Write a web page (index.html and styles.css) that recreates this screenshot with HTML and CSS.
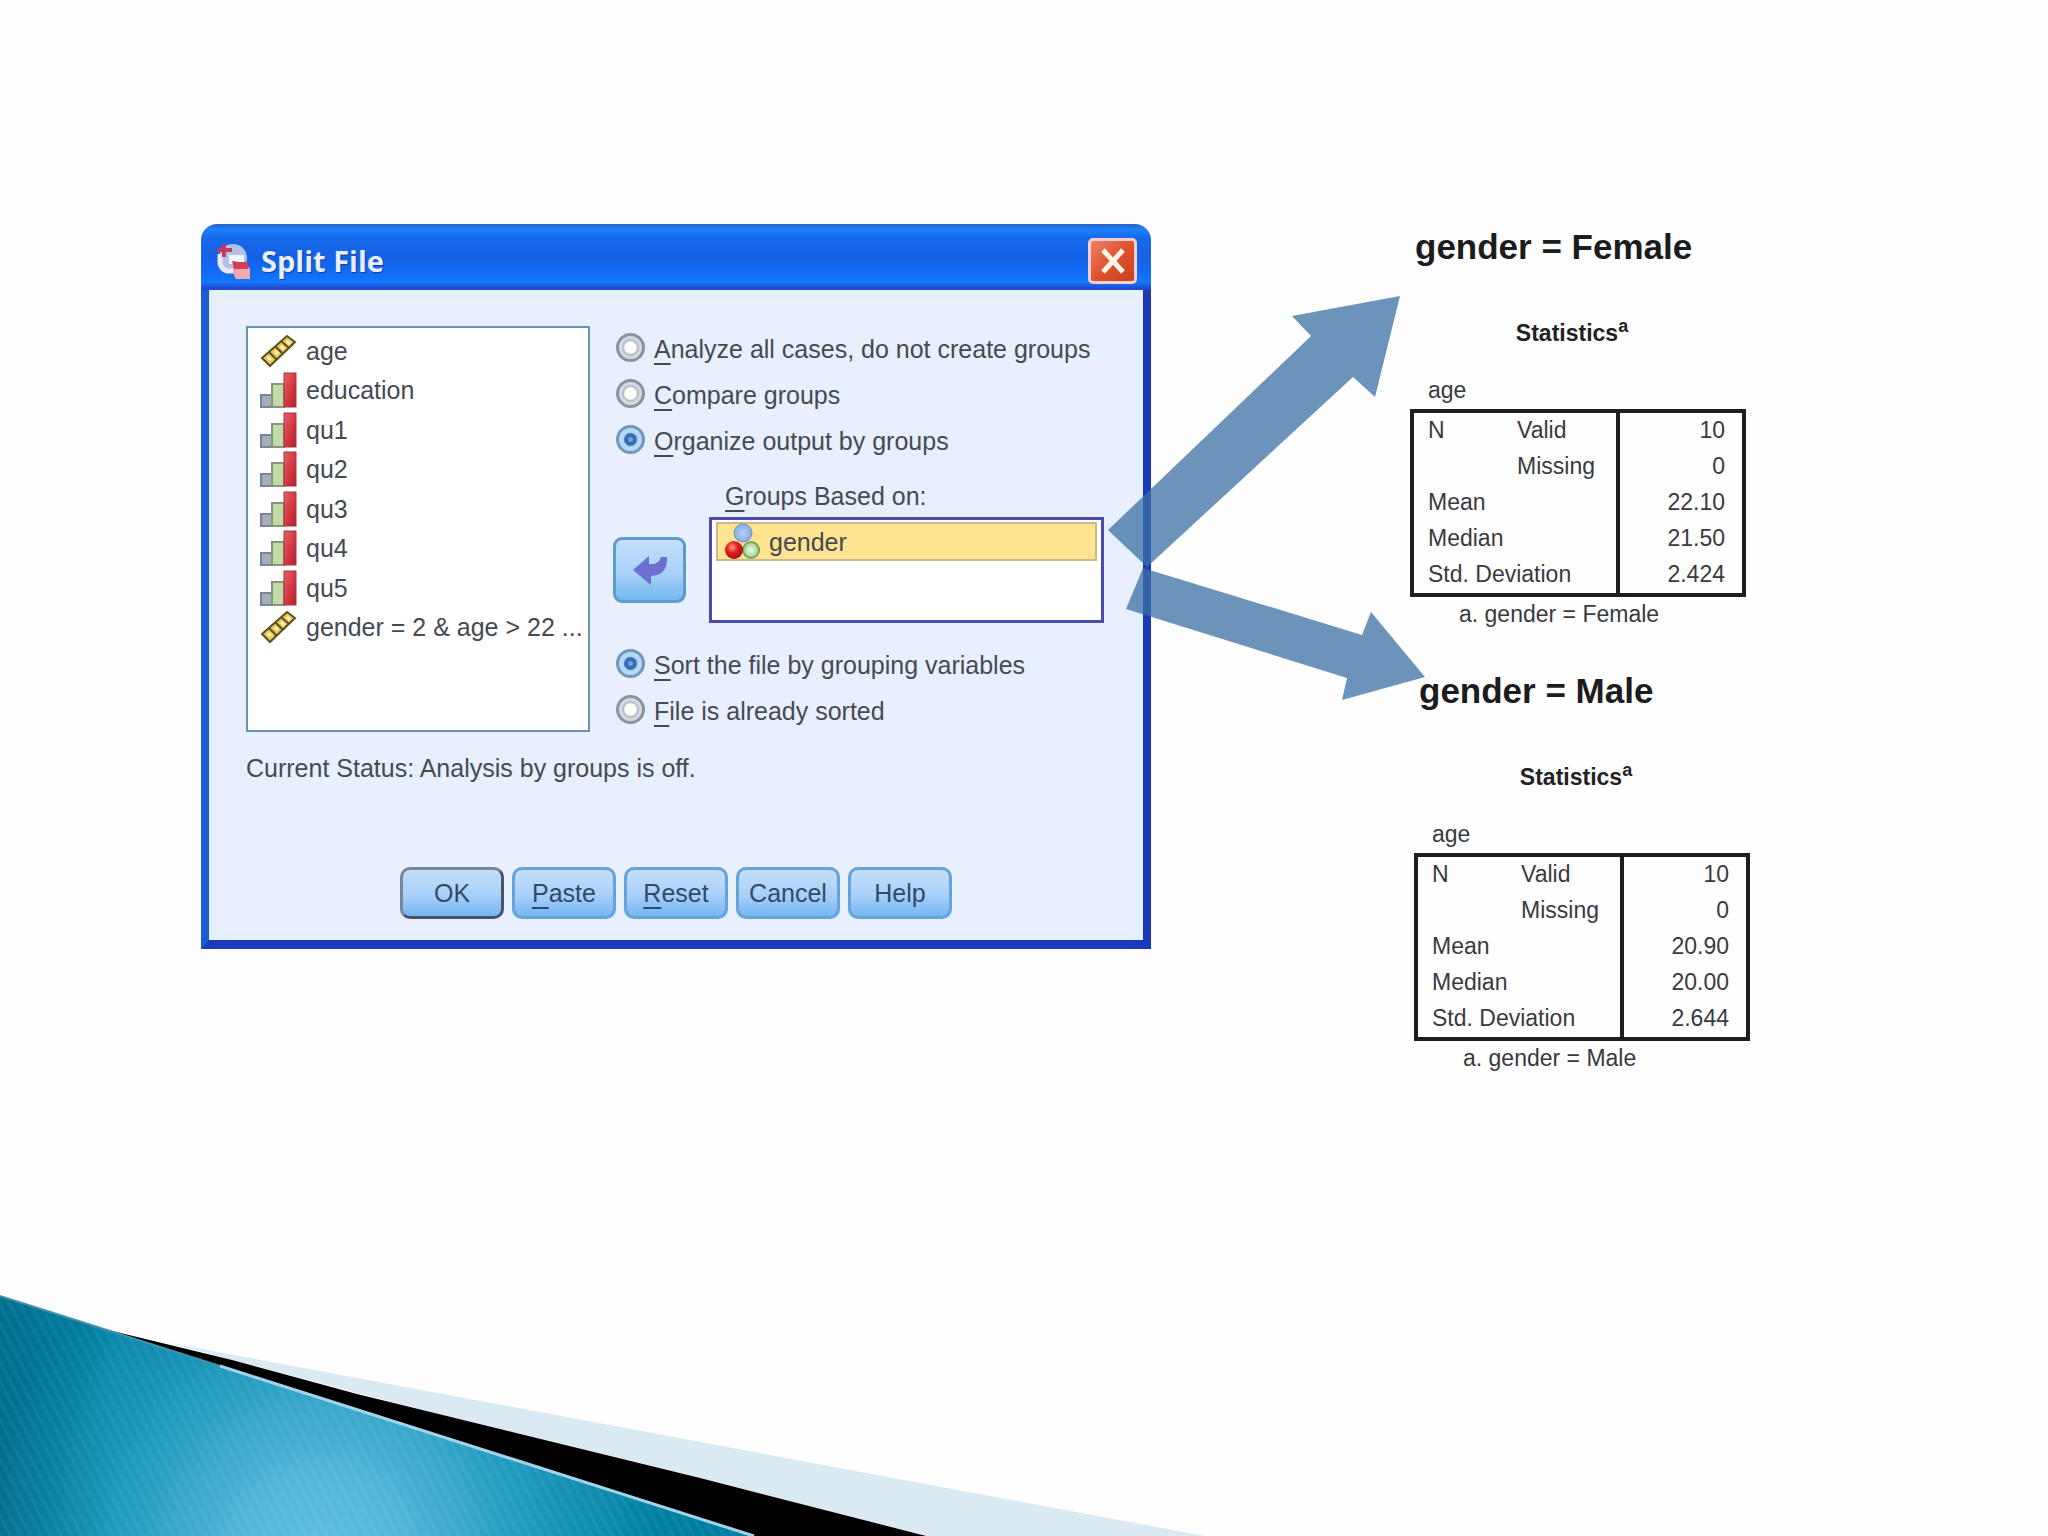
FILE: index.html
```html
<!DOCTYPE html>
<html lang="en">
<head>
    <meta charset="UTF-8">
    <meta name="viewport" content="width=device-width, initial-scale=1.0">
    <title>Split File</title>
    <link rel="stylesheet" href="styles.css">
</head>
<body>

    <!-- Shared icons -->
    <svg class="icon-defs" width="0" height="0" aria-hidden="true">
        <defs>
            <linearGradient id="red" x1="0" y1="0" x2="1" y2="1">
                <stop offset="0" stop-color="#d9656a"/>
                <stop offset="0.5" stop-color="#d93a45"/>
                <stop offset="1" stop-color="#b01f2a"/>
            </linearGradient>
            <radialGradient id="redBall" cx="0.4" cy="0.35" r="0.6">
                <stop offset="0" stop-color="#ff9a86"/>
                <stop offset="0.5" stop-color="#e5231c"/>
                <stop offset="1" stop-color="#b01313"/>
            </radialGradient>
            <radialGradient id="blueBall" cx="0.5" cy="0.5" r="0.6">
                <stop offset="0" stop-color="#b9d3f8"/>
                <stop offset="1" stop-color="#7ba3dd"/>
            </radialGradient>
            <radialGradient id="greenBall" cx="0.5" cy="0.5" r="0.6">
                <stop offset="0" stop-color="#eefbe0"/>
                <stop offset="1" stop-color="#8cc47a"/>
            </radialGradient>
            <symbol id="scale" viewBox="0 0 37 36">
                <path d="M2 25L27 3L35 9L10 33Z" fill="#e8c95c" stroke="#5c4f22" stroke-width="2"/>
                <path d="M9 19L17 27M15 13L23 21M21 8L29 15" stroke="#5c4f22" stroke-width="2"/>
                <path d="M8 24l3 3M15 18l3 3M21 13l3 3M27 8l3 3" stroke="#fbf3c0" stroke-width="3"/>
            </symbol>
            <symbol id="ordinal" viewBox="0 0 37 36">
                <rect x="1" y="23" width="12" height="12" fill="#a3adbd" stroke="#7b8492" stroke-width="2"/>
                <rect x="12" y="12" width="12" height="23" fill="#c3dba6" stroke="#87957a" stroke-width="2"/>
                <rect x="24" y="1" width="12" height="34" fill="url(#red)" stroke="#a8343c" stroke-width="1"/>
            </symbol>
        </defs>
    </svg>

    <main class="slide">
        <div class="content">

            <form class="dialog">
                <header class="titlebar">
                    <svg class="app-icon" viewBox="0 0 36 38" aria-hidden="true">
                        <circle cx="18" cy="16" r="14" fill="#b3c3e8"/>
                        <path d="M5 12v8a9 9 0 0 0 9 9h4" fill="none" stroke="#efe6f3" stroke-width="5"/>
                        <path d="M14 13h15v9H14z" fill="#f4f4fb"/>
                        <path d="M2 8h15M9 2v13" stroke="#c5395c" stroke-width="4"/>
                        <path d="M18 22h13l4 5v10H21l-3-6z" fill="#f3a9b1"/>
                        <path d="M17 19l7 1h9v7H19z" fill="#d83c50"/>
                    </svg>
                    <h1>Split File</h1>
                    <button type="button" class="close" aria-label="Close">
                        <svg viewBox="0 0 24 26" aria-hidden="true"><path d="M2 2L22 24M22 2L2 24" stroke="#fff6e8" stroke-width="5"/></svg>
                    </button>
                </header>

                <div class="client">
                    <div class="columns">
                        <ul class="variables">
                            <li><svg aria-hidden="true"><use href="#scale"/></svg>age</li>
                            <li><svg aria-hidden="true"><use href="#ordinal"/></svg>education</li>
                            <li><svg aria-hidden="true"><use href="#ordinal"/></svg>qu1</li>
                            <li><svg aria-hidden="true"><use href="#ordinal"/></svg>qu2</li>
                            <li><svg aria-hidden="true"><use href="#ordinal"/></svg>qu3</li>
                            <li><svg aria-hidden="true"><use href="#ordinal"/></svg>qu4</li>
                            <li><svg aria-hidden="true"><use href="#ordinal"/></svg>qu5</li>
                            <li><svg aria-hidden="true"><use href="#scale"/></svg>gender = 2 &amp; age &gt; 22 ...</li>
                        </ul>

                        <div class="options">
                            <div class="radios">
                                <label><input type="radio" name="mode"><span><u>A</u>nalyze all cases, do not create groups</span></label>
                                <label><input type="radio" name="mode"><span><u>C</u>ompare groups</span></label>
                                <label><input type="radio" name="mode" checked><span><u>O</u>rganize output by groups</span></label>
                            </div>

                            <div class="groups">
                                <span class="groups-label" id="groupsLabel"><u>G</u>roups Based on:</span>
                                <button type="button" class="move" aria-label="Remove variable">
                                    <svg viewBox="0 0 34 32" aria-hidden="true"><path d="M0 16L16 2V10Q26 11 28 3H34Q35 21 18 22V31Z" fill="#6c70cf"/></svg>
                                </button>
                                <ul class="group-list" aria-labelledby="groupsLabel">
                                    <li>
                                        <svg viewBox="0 0 37 37" aria-hidden="true">
                                            <circle cx="19" cy="10" r="9" fill="url(#blueBall)" stroke="#6f93c4"/>
                                            <circle cx="27" cy="27" r="8" fill="url(#greenBall)" stroke="#6ea85c" stroke-width="2"/>
                                            <circle cx="10" cy="27" r="9" fill="url(#redBall)"/>
                                        </svg>
                                        gender
                                    </li>
                                </ul>
                            </div>

                            <div class="radios">
                                <label><input type="radio" name="sort" checked><span><u>S</u>ort the file by grouping variables</span></label>
                                <label><input type="radio" name="sort"><span><u>F</u>ile is already sorted</span></label>
                            </div>
                        </div>
                    </div>

                    <p class="status">Current Status: Analysis by groups is off.</p>

                    <div class="buttons">
                        <button type="submit" class="default">OK</button>
                        <button type="button"><u>P</u>aste</button>
                        <button type="reset"><u>R</u>eset</button>
                        <button type="button">Cancel</button>
                        <button type="button">Help</button>
                    </div>
                </div>
            </form>

            <div class="reports">
                <section class="report">
                    <h2>gender = Female</h2>
                    <h3>Statistics<sup>a</sup></h3>
                    <p class="variable">age</p>
                    <table>
                        <tr><th class="stat">N</th><th class="edge">Valid</th><td>10</td></tr>
                        <tr><th class="stat"></th><th class="edge">Missing</th><td>0</td></tr>
                        <tr><th class="stat edge" colspan="2">Mean</th><td>22.10</td></tr>
                        <tr><th class="stat edge" colspan="2">Median</th><td>21.50</td></tr>
                        <tr><th class="stat edge" colspan="2">Std. Deviation</th><td>2.424</td></tr>
                    </table>
                    <p class="note">a. gender = Female</p>
                </section>

                <section class="report">
                    <h2>gender = Male</h2>
                    <h3>Statistics<sup>a</sup></h3>
                    <p class="variable">age</p>
                    <table>
                        <tr><th class="stat">N</th><th class="edge">Valid</th><td>10</td></tr>
                        <tr><th class="stat"></th><th class="edge">Missing</th><td>0</td></tr>
                        <tr><th class="stat edge" colspan="2">Mean</th><td>20.90</td></tr>
                        <tr><th class="stat edge" colspan="2">Median</th><td>20.00</td></tr>
                        <tr><th class="stat edge" colspan="2">Std. Deviation</th><td>2.644</td></tr>
                    </table>
                    <p class="note">a. gender = Male</p>
                </section>
            </div>

            <!-- Arrows from the group list to each report -->
            <svg class="arrows" viewBox="0 0 340 430" aria-hidden="true">
                <path d="M7 246L210 52L191 32L299 12L274 113L252 93L46 283Z"/>
                <path d="M42 284L261 351L270 328L324 393L241 416L246 394L25 325Z"/>
            </svg>
        </div>

        <svg class="swoosh" viewBox="0 0 2048 246" aria-hidden="true">
            <defs>
                <radialGradient id="teal" gradientUnits="userSpaceOnUse" cx="0" cy="0" r="1" gradientTransform="translate(320 270) rotate(-68) scale(360 340)">
                    <stop offset="0" stop-color="#62c0e2"/>
                    <stop offset="0.25" stop-color="#52b5d8"/>
                    <stop offset="0.6" stop-color="#209abf"/>
                    <stop offset="1" stop-color="#007fa3"/>
                </radialGradient>
                <linearGradient id="shade" x1="0" x2="1">
                    <stop offset="0" stop-color="#00596f" stop-opacity="0.4"/>
                    <stop offset="0.15" stop-color="#00596f" stop-opacity="0"/>
                </linearGradient>
                <pattern id="stripes" width="9" height="9" patternUnits="userSpaceOnUse" patternTransform="rotate(-28)">
                    <rect width="4" height="9" fill="#ffffff" opacity="0.04"/>
                </pattern>
            </defs>
            <path d="M170 53L1205 246H900L232 70Z" fill="#daeaf2"/>
            <path d="M100 38L232 70L357 104L700 188L926 246H740Z" fill="#000000"/>
            <path d="M0 6L754 246H0Z" fill="url(#teal)"/>
            <path d="M0 6L754 246H0Z" fill="url(#shade)"/>
            <path d="M0 6L754 246H0Z" fill="url(#stripes)"/>
            <path d="M0 6L220 76" stroke="#3f93aa" stroke-width="2"/>
            <path d="M220 76L754 246" stroke="#a3d3e8" stroke-width="3"/>
        </svg>
    </main>

</body>
</html>
```

FILE: styles.css
```css
* {
    box-sizing: border-box;
}
body {
    margin: 0;
    background-color: #fefefe;
    font-family: "Liberation Sans", Arial, sans-serif;
    font-size: 25px;
    line-height: 32px;
    color: #454a55;
}
h1, h2, h3, p, ul {
    margin: 0;
    padding: 0;
}
ul {
    list-style: none;
}
button {
    font-family: inherit;
    font-size: 25px;
    color: #2f4a6b;
    cursor: pointer;
}
u {
    text-underline-offset: 5px;
    text-decoration-thickness: 2px;
}
.icon-defs {
    position: absolute;
}
.slide {
    position: relative;
    min-height: 100vh;
    padding: 224px 201px 0;
    overflow: hidden;
}
.content {
    position: relative;
    display: flex;
    align-items: flex-start;
    gap: 259px;
}

/* Dialog */
.dialog {
    flex: 0 0 950px;
    border-radius: 16px 16px 0 0;
    overflow: hidden;
}
.titlebar {
    display: flex;
    align-items: center;
    height: 66px;
    padding: 12px 14px 4px;
    background: linear-gradient(#2a62c4 0, #1c80fb 8%, #1668ea 22%, #1560e4 50%, #126af4 70%, #1478fb 88%, #1d50d8 96%, #2443c8 100%);
}
.app-icon {
    width: 36px;
    height: 38px;
    margin-right: 10px;
}
.titlebar h1 {
    flex: 1;
    font-family: "Open Sans", sans-serif;
    font-size: 29px;
    font-weight: 700;
    line-height: 36px;
    color: #e6eeff;
    text-shadow: 1px 1px 1px #0c3a9c;
}
.close {
    display: flex;
    align-items: center;
    justify-content: center;
    width: 49px;
    height: 46px;
    padding: 0;
    border: 3px solid #f3cfd2;
    border-radius: 5px;
    background: linear-gradient(135deg, #ee8168, #e0522f 50%, #c8401f);
}
.close svg {
    width: 24px;
    height: 26px;
}
.client {
    padding: 36px 37px 21px;
    border: solid #1c39bb;
    border-width: 0 8px 9px;
    border-left-color: #1d5bd2;
    background-color: #e8effe;
    box-shadow: inset 0 0 10px #d9f3fe;
}
.columns {
    display: flex;
    gap: 23px;
}
.variables {
    display: flex;
    flex-direction: column;
    width: 344px;
    height: 406px;
    padding: 3px 0 83px 12px;
    border: 2px solid #6c93b0;
    background-color: #ffffff;
}
.variables li {
    flex: 1;
    display: flex;
    align-items: center;
    gap: 9px;
    white-space: nowrap;
}
.variables svg {
    flex: none;
    width: 37px;
    height: 36px;
}
.options {
    flex: 1;
    padding-top: 7px;
}
.radios {
    display: flex;
    flex-direction: column;
    gap: 14px;
    padding-left: 3px;
}
.radios label {
    display: flex;
    gap: 9px;
    white-space: nowrap;
}
.radios input {
    appearance: none;
    width: 29px;
    height: 29px;
    margin: 0;
    border: 3px solid #8b929f;
    border-radius: 50%;
    background: radial-gradient(circle, #ffffff 34%, #b3b9c5 44%, #d5dae3 58%);
}
.radios input:checked {
    border-color: #7196bb;
    background: radial-gradient(circle, #6fa5da 12%, #2b68ad 20%, #3973b5 36%, #b4d8f4 44%);
}
.groups {
    display: grid;
    grid-template-columns: 73px 395px;
    align-items: center;
    column-gap: 23px;
    row-gap: 5px;
    margin: 23px 0 26px;
}
.groups-label {
    grid-column: 2;
    padding-left: 16px;
}
.move {
    display: flex;
    align-items: center;
    justify-content: center;
    height: 66px;
    padding: 0;
    border: 3px solid #5c9ccb;
    border-radius: 9px;
    background: linear-gradient(#c3e0fb, #a9d2f8 55%, #76b8ee);
}
.move svg {
    width: 34px;
    height: 32px;
}
.group-list {
    height: 106px;
    padding: 2px 4px;
    border: 3px solid #4b49b2;
    background-color: #ffffff;
}
.group-list li {
    display: flex;
    align-items: center;
    gap: 8px;
    height: 39px;
    padding-left: 6px;
    border: 2px solid #cbb88f;
    background-color: #fee391;
}
.group-list svg {
    width: 37px;
    height: 37px;
}
.status {
    margin-top: 20px;
}
.buttons {
    display: flex;
    justify-content: center;
    gap: 8px;
    margin-top: 83px;
}
.buttons button {
    width: 104px;
    height: 52px;
    padding: 0;
    border: 3px solid #66a3d8;
    border-radius: 10px;
    background: linear-gradient(#c3dffb, #a8d0f8 55%, #74b6f2);
}
.buttons .default {
    border-color: #7a8698 #4a5368 #4a5368 #7a8698;
}

/* Output reports */
.reports {
    flex: 0 0 340px;
    padding-top: 3px;
    font-size: 23px;
    color: #3a3a3e;
}
.report {
    width: 336px;
}
.report + .report {
    margin: 41px 0 0 4px;
}
.report h2 {
    padding-left: 5px;
    font-size: 35px;
    line-height: 40px;
    color: #1c1c1e;
    white-space: nowrap;
}
.report h3 {
    margin-top: 50px;
    padding-right: 12px;
    font-size: 23px;
    text-align: center;
    color: #222225;
}
.report sup {
    font-size: 18px;
    line-height: 0;
}
.variable {
    margin: 25px 0 3px;
    padding-left: 18px;
}
table {
    width: 100%;
    border: 4px solid #1e1e22;
    border-spacing: 0;
    table-layout: fixed;
}
th, td {
    height: 36px;
    padding: 0 0 2px;
    font-weight: normal;
    line-height: 32px;
    text-align: left;
}
th {
    width: 103px;
}
.stat {
    padding-left: 14px;
}
.edge {
    border-right: 4px solid #1e1e22;
}
td {
    padding-right: 17px;
    text-align: right;
}
.note {
    margin-top: 1px;
    padding-left: 49px;
}

/* Drawn over the dialog and the reports */
.arrows {
    position: absolute;
    left: 900px;
    top: 60px;
    width: 340px;
    height: 430px;
    pointer-events: none;
}
.arrows path {
    fill: #3b70a3;
    fill-opacity: 0.75;
}
.swoosh {
    position: absolute;
    left: 0;
    bottom: 0;
    width: 100%;
}
```
